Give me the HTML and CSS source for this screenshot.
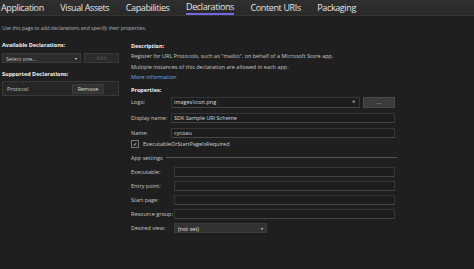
FILE: index.html
```html
<!DOCTYPE html>
<html>
<head>
  <meta charset="utf-8">
  <title>Package Manifest - Declarations</title>
  <link rel="stylesheet" href="styles.css">
</head>
<body>
  <nav class="tabs">
    <span class="tab">Application</span>
    <span class="tab">Visual Assets</span>
    <span class="tab">Capabilities</span>
    <span class="tab active">Declarations</span>
    <span class="tab">Content URIs</span>
    <span class="tab">Packaging</span>
  </nav>

  <p class="intro">Use this page to add declarations and specify their properties.</p>

  <div class="content">
    <aside class="left">
      <h4>Available Declarations:</h4>
      <div class="pick-row">
        <div class="select">Select one...<span class="caret">&#9662;</span></div>
        <button class="btn disabled">Add</button>
      </div>
      <h4 class="supported">Supported Declarations:</h4>
      <div class="list">
        <span>Protocol</span>
        <button class="btn remove">Remove</button>
      </div>
    </aside>

    <main class="right">
      <h4>Description:</h4>
      <p class="desc">Register for URL Protocols, such as "mailto", on behalf of a Microsoft Store app.</p>
      <p class="desc">Multiple instances of this declaration are allowed in each app.</p>
      <a class="desc link">More information</a>

      <h4 class="props-title">Properties:</h4>
      <div class="props">
        <label>Logo:</label>
        <div class="input logo">images\icon.png<span class="clear">&#10005;</span></div>
        <button class="btn browse">...</button>

        <label>Display name:</label>
        <div class="input wide">SDK Sample URI Scheme</div>

        <label>Name:</label>
        <div class="input wide">cycoau</div>
      </div>

      <div class="check-row">
        <span class="checkbox">&#10003;</span>
        <span>ExecutableOrStartPageIsRequired</span>
      </div>

      <div class="group-title">
        <span>App settings</span>
        <span class="rule"></span>
      </div>

      <div class="settings">
        <label>Executable:</label>
        <div class="input"></div>
        <label>Entry point:</label>
        <div class="input"></div>
        <label>Start page:</label>
        <div class="input"></div>
        <label>Resource group:</label>
        <div class="input"></div>
        <label>Desired view:</label>
        <div class="select view">(not set)<span class="caret">&#9662;</span></div>
      </div>
    </main>
  </div>
</body>
</html>
```

FILE: styles.css
```css
body {
  margin: 0;
  background: #1f1f1f;
  color: #d4d4d4;
  font-family: "Segoe UI", "Open Sans", sans-serif;
  font-size: 5.5px;
  width: 474px;
  height: 269px;
  overflow: hidden;
}

.tabs {
  display: flex;
  gap: 16.5px;
  height: 16px;
  padding-left: 1px;
  background: linear-gradient(#2f2f2f, #292929);
  border-bottom: 1px solid #333;
  box-sizing: border-box;
}

.tab {
  font-size: 9px;
  letter-spacing: -0.38px;
  color: #e6e6e6;
  line-height: 16px;
  white-space: nowrap;
}

.tab.active {
  border-bottom: 2px solid #7466e0;
  line-height: 13px;
  height: 13px;
}

.intro {
  margin: 9px 0 0 2px;
  color: #b5b5b5;
  font-size: 5px;
  line-height: 6px;
}

.content {
  display: grid;
  grid-template-columns: 117px 264px;
  column-gap: 12px;
  padding-left: 2px;
  margin-top: 11px;
}

h4 {
  margin: 0;
  font-size: 5.5px;
  font-weight: bold;
  color: #f2f2f2;
  line-height: 7px;
}

.right > h4:first-child {
  margin-top: 1px;
}

.pick-row {
  display: flex;
  gap: 3px;
  margin-top: 4px;
}

.select {
  position: relative;
  width: 79px;
  height: 10px;
  line-height: 10px;
  padding-left: 3px;
  box-sizing: border-box;
  background: #2c2c2c;
  border: 1px solid #3a3a3a;
  color: #c8c8c8;
}

.caret {
  position: absolute;
  right: 3px;
  top: 0;
  font-size: 4px;
  color: #ddd;
}

.btn {
  font-family: inherit;
  font-size: 5.5px;
  padding: 0;
  border: 1px solid #3a3a3a;
  background: #333;
  color: #ddd;
  height: 10px;
  line-height: 8px;
}

.btn.disabled {
  width: 35px;
  background: #2b2b2b;
  color: #5c5c5c;
}

.supported {
  margin-top: 8px;
}

.list {
  display: flex;
  align-items: center;
  justify-content: space-between;
  margin-top: 3px;
  height: 15px;
  padding: 0 14px 0 4px;
  box-sizing: border-box;
  border: 1px solid #383838;
  background: #262626;
  color: #c8c8c8;
}

.btn.remove {
  width: 32px;
  height: 10px;
  border-color: #3c3c3c;
}

.right .desc {
  display: block;
  margin: 3px 0 0;
  line-height: 7px;
  color: #c8c8c8;
}

.right p.desc + p.desc {
  margin-top: 3.5px;
}

.right .link {
  color: #7aa6e0;
}

.props-title {
  margin-top: 6px;
}

.props {
  display: grid;
  grid-template-columns: 37px 1fr 35px;
  column-gap: 3px;
  row-gap: 5px;
  align-items: center;
  margin-top: 3px;
}

.props label,
.settings label {
  color: #c8c8c8;
  white-space: nowrap;
}

.input {
  position: relative;
  height: 10px;
  line-height: 8px;
  padding-left: 2px;
  box-sizing: border-box;
  border: 1px solid #363636;
  border-bottom-color: #444;
  background: #1d1d1d;
  color: #dedede;
}

.input.logo {
  height: 11px;
  margin-right: -3px;
}

.input.wide {
  grid-column: 2 / 4;
}

.clear {
  position: absolute;
  right: 4px;
  top: 0;
  font-size: 4px;
  color: #eee;
}

.btn.browse {
  height: 11px;
  margin-left: 3px;
  background: #3b3b3b;
  border-color: #4a4a4a;
}

.check-row {
  display: flex;
  align-items: center;
  gap: 4px;
  margin-top: 2px;
  color: #d0d0d0;
}

.checkbox {
  width: 6px;
  height: 6px;
  border: 1px solid #777;
  font-size: 5px;
  line-height: 6px;
  text-align: center;
  color: #eee;
}

.group-title {
  display: flex;
  align-items: center;
  gap: 3px;
  margin-top: 6px;
  color: #c8c8c8;
}

.group-title .rule {
  flex: 1;
  height: 1px;
  background: #555;
  margin-right: -2px;
}

.settings {
  display: grid;
  grid-template-columns: 40px 1fr;
  column-gap: 3px;
  row-gap: 4px;
  align-items: center;
  margin-top: 5px;
}

.select.view {
  width: 93px;
  background: #333;
  border-color: #3c3c3c;
  color: #e0e0e0;
}
```
